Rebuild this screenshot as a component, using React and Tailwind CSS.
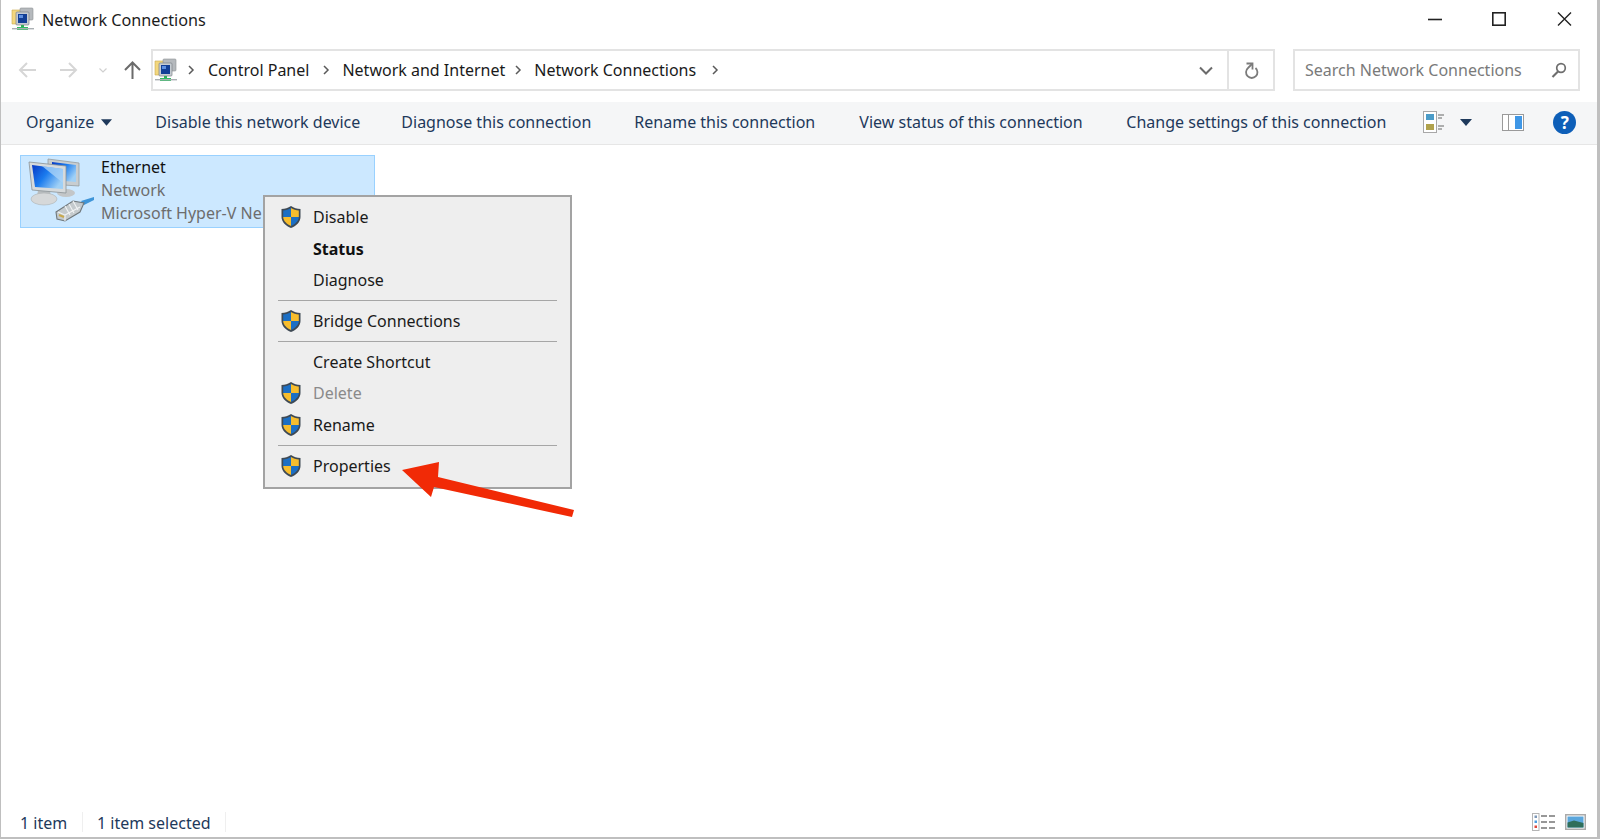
const font = { fontFamily: '"Noto Sans", sans-serif' };

function Shield() {
  return (
    <svg width="22" height="24" viewBox="0 0 22 24" className="shrink-0">
      <path d="M11 1 C8 3 5 4 1.5 4 L1.5 12 C1.5 17 6 21 11 23 C16 21 20.5 17 20.5 12 L20.5 4 C17 4 14 3 11 1Z" fill="#3f4a55" />
      <path d="M11 3 C8.5 4.5 6 5.5 3.2 5.6 L3.2 12 L11 12Z" fill="#1c6fc4" />
      <path d="M11 3 C13.5 4.5 16 5.5 18.8 5.6 L18.8 12 L11 12Z" fill="#f7bd2d" />
      <path d="M3.2 12 L11 12 L11 21 C7 19.2 3.2 16 3.2 12Z" fill="#f7bd2d" />
      <path d="M18.8 12 L11 12 L11 21 C15 19.2 18.8 16 18.8 12Z" fill="#1c6fc4" />
    </svg>
  );
}

function NetFolderIcon() {
  return (
    <svg width="24" height="25" viewBox="0 0 24 25" className="shrink-0">
      <path d="M1 3h8l2 2v12H1z" fill="#f3d77e" stroke="#c9a94c" strokeWidth="0.6" />
      <rect x="9" y="1" width="13" height="12" rx="1" fill="#b5b9bd" stroke="#8d9195" strokeWidth="0.6" />
      <rect x="5" y="5" width="13" height="13" rx="1" fill="#c6ccd2" stroke="#7d8288" strokeWidth="0.7" />
      <rect x="7" y="7" width="9" height="9" fill="#123f96" />
      <rect x="8" y="8" width="4" height="3" fill="#5d8fe0" />
      <rect x="10" y="18" width="3" height="3" fill="#2fae5b" />
      <rect x="6" y="20" width="11" height="3" fill="#2fbd62" />
      <rect x="1" y="21" width="22" height="1.4" fill="#aab0b3" />
    </svg>
  );
}

function EthernetIcon() {
  return (
    <svg width="70" height="66" viewBox="0 0 70 66" className="shrink-0 mt-[1px]">
      <defs>
        <linearGradient id="scr" x1="0" y1="0" x2="1" y2="0.6">
          <stop offset="0" stopColor="#0838c4" />
          <stop offset="0.5" stopColor="#1a7bee" />
          <stop offset="1" stopColor="#9fd0f6" />
        </linearGradient>
      </defs>
      <ellipse cx="39" cy="36" rx="9" ry="4" fill="#c3c6c8" />
      <path d="M21 2 L52 6 L52 29 L21 27Z" fill="#c8cdd0" stroke="#949ca0" strokeWidth="0.8" />
      <path d="M25 5 L49 8 L49 25 L25 23Z" fill="url(#scr)" />
      <path d="M11 33 L23 34 L24 40 L10 40Z" fill="#b9bdbf" />
      <ellipse cx="17" cy="42" rx="13" ry="6" fill="#d6d8d9" stroke="#adb1b3" strokeWidth="0.6" />
      <path d="M2 5 L39 9 L39 36 L5 33Z" fill="#d6dadc" stroke="#8a9296" strokeWidth="0.8" />
      <path d="M5 8 L36 12 L36 32 L8 30Z" fill="url(#scr)" />
      <path d="M15 9 L36 12 L36 26 Z" fill="#a9d2f8" opacity="0.8" />
      <path d="M54 44 L67 40 L67 43 L57 48Z" fill="#3f95d8" />
      <path d="M29 55 L46 44 L57 46 L53 55 L38 64 L30 62Z" fill="#c4cacd" stroke="#6f777b" strokeWidth="1.1" />
      <path d="M38 49 L43 58 M42 47 L47 56 M46 44 L51 53 M31 55 L38 58 L38 64 M38 58 L53 50" fill="none" stroke="#f1f3f4" strokeWidth="1.1" />
      <path d="M32 58 L37 60" stroke="#c9a94c" strokeWidth="2" />
    </svg>
  );
}

function Sep() {
  return (
    <svg width="8" height="12" viewBox="0 0 8 12" className="shrink-0">
      <path d="M2 2 L6 6 L2 10" fill="none" stroke="#5a5a5a" strokeWidth="1.5" />
    </svg>
  );
}

function Caret({ className }) {
  return (
    <svg width="12" height="7" viewBox="0 0 12 7" className={className}>
      <path d="M0 0H12L6 7Z" fill="#1e395b" />
    </svg>
  );
}

function MenuItem({ label, shield, bold, disabled }) {
  return (
    <div className="flex items-center h-[31.3px]">
      <div className="w-[16px] mr-[14px] ml-[5px] flex items-center justify-center">{shield && <Shield />}</div>
      <span className={`text-[16px] ${bold ? 'font-bold text-[#111]' : disabled ? 'text-[#8a8a8a]' : 'text-[#1a1a1a]'}`}>{label}</span>
    </div>
  );
}

function MenuSep() {
  return <div className="h-px bg-[#a6a6a6] mr-[13px] my-[4.4px]" />;
}

export default function App() {
  const tools = [
    ['Disable this network device', 'w-[246px]'],
    ['Diagnose this connection', 'w-[233px]'],
    ['Rename this connection', 'w-[225px]'],
    ['View status of this connection', 'w-[267px]'],
  ];
  return (
    <div style={font} className="relative w-[1600px] h-[839px] overflow-hidden bg-white border-l border-r-[3px] border-b-2 border-[#bfbfbf] flex flex-col text-[#1a1a1a]">
      {/* title bar */}
      <div className="h-[49px] flex pl-[10px] pr-[25px] pt-[7px] shrink-0">
        <NetFolderIcon />
        <span className="ml-[7px] text-[16.2px] leading-[26px] text-[#1c1c1c]">Network Connections</span>
        <div className="ml-auto flex items-start gap-[50px] pt-[5px]">
          <svg width="14" height="14" viewBox="0 0 14 14"><path d="M0 7.5H14" stroke="#222" strokeWidth="1.6" /></svg>
          <svg width="14" height="14" viewBox="0 0 14 14"><rect x="0.8" y="0.8" width="12.4" height="12.4" fill="none" stroke="#222" strokeWidth="1.6" /></svg>
          <svg width="15" height="14" viewBox="0 0 15 14" className="ml-[1px]"><path d="M1 0.5L14 13.5M14 0.5L1 13.5" stroke="#222" strokeWidth="1.4" /></svg>
        </div>
      </div>
      {/* nav */}
      <div className="h-[42px] flex items-center shrink-0">
        <div className="w-[150px] flex items-center pl-[17px] shrink-0">
          <svg width="18" height="16" viewBox="0 0 18 16"><path d="M18 8H2M9 1L2 8l7 7" fill="none" stroke="#d6d6d6" strokeWidth="2" /></svg>
          <svg width="18" height="16" viewBox="0 0 18 16" className="ml-[24px]"><path d="M0 8H16M9 1l7 7-7 7" fill="none" stroke="#d6d6d6" strokeWidth="2" /></svg>
          <svg width="8" height="5" viewBox="0 0 8 5" className="ml-[21px]"><path d="M0.5 0.5L4 4l3.5-3.5" fill="none" stroke="#d0d0d0" strokeWidth="1.2" /></svg>
          <svg width="17" height="18" viewBox="0 0 17 18" className="ml-[17px]"><path d="M8.5 18V2M1 9l7.5-7.5L16 9" fill="none" stroke="#6b6b6b" strokeWidth="2" /></svg>
        </div>
        <div className="w-[1124px] h-full border-2 border-[#e3e3e3] flex items-center shrink-0 text-[16px]">
          <div className="ml-[1px] mr-[9px]"><NetFolderIcon /></div>
          <Sep />
          <span className="ml-[13px]">Control Panel</span>
          <span className="ml-[13px]"><Sep /></span>
          <span className="ml-[12px]">Network and Internet</span>
          <span className="ml-[9px]"><Sep /></span>
          <span className="ml-[12px]">Network Connections</span>
          <span className="ml-[15px]"><Sep /></span>
          <div className="ml-auto flex items-center h-full">
            <svg width="14" height="9" viewBox="0 0 14 9" className="mr-[14px]"><path d="M1 1.5L7 7.5l6-6" fill="none" stroke="#6b6b6b" strokeWidth="2" /></svg>
            <div className="w-[46px] h-full border-l-2 border-[#e3e3e3] flex items-center justify-center">
              <svg width="16" height="20" viewBox="0 0 16 20"><path d="M3.5 3.5H9.5V9.5" fill="none" stroke="#7b7b7b" strokeWidth="1.8" /><path d="M9 4L5 8A5.7 5.7 0 1 0 12.5 8" fill="none" stroke="#7b7b7b" strokeWidth="1.8" /></svg>
            </div>
          </div>
        </div>
        <div className="ml-[18px] w-[287px] h-full border-2 border-[#e3e3e3] flex items-center px-[10px] shrink-0 text-[16px] text-[#7a7a7a]">
          <span>Search Network Connections</span>
          <svg width="16" height="16" viewBox="0 0 16 16" className="ml-auto mr-[1px]"><circle cx="10" cy="6" r="4.3" fill="none" stroke="#6e6e6e" strokeWidth="1.7" /><path d="M7 9.5L1.5 15" stroke="#6e6e6e" strokeWidth="2.2" /></svg>
        </div>
      </div>
      {/* toolbar */}
      <div className="mt-[11px] h-[43px] bg-[#f5f6f7] border-b border-[#e6e6e6] flex items-center pb-[2px] pl-[25px] text-[16px] text-[#1e395b] shrink-0">
        <span>Organize</span>
        <Caret className="ml-[7px] w-[11px] mr-[43px]" />
        {tools.map(([t, w]) => <span key={t} className={`${w} whitespace-nowrap`}>{t}</span>)}
        <span className="whitespace-nowrap">Change settings of this connection</span>
        <svg width="22" height="22" viewBox="0 0 22 22" className="ml-[37px]">
          <rect x="0.5" y="0.5" width="13" height="21" fill="#fff" stroke="#a8a8a8" />
          <rect x="3" y="3" width="8" height="6" fill="#4b9cc8" />
          <rect x="3" y="13" width="8" height="6" fill="#b0a24c" />
          <path d="M15 4h6M15 7h4M15 15h6M15 18h4" stroke="#666" strokeWidth="1.2" />
        </svg>
        <Caret className="ml-[15px] w-[12px]" />
        <svg width="22" height="17" viewBox="0 0 22 17" className="ml-[30px]">
          <rect x="0.5" y="0.5" width="21" height="16" fill="#fff" stroke="#9a9a9a" />
          <rect x="13" y="2" width="7" height="13" fill="#3f97e6" />
          <path d="M6.5 1v15" stroke="#9a9a9a" />
        </svg>
        <div className="ml-[29px] w-[23px] h-[23px] rounded-full bg-[#0e5fb8] flex items-center justify-center text-white text-[17px] font-bold leading-none">?</div>
      </div>
      {/* content */}
      <div className="flex-1 pt-[10px] pl-[19px]">
        <div className="w-[355px] h-[73px] bg-[#cce8ff] border border-[#99d1ff] flex pl-[6px]">
          <EthernetIcon />
          <div className="ml-[4px] text-[16px] leading-[23px] whitespace-nowrap">
            <div className="text-[#111]">Ethernet</div>
            <div className="text-[#6d6d6d]">Network</div>
            <div className="text-[#6d6d6d]">Microsoft Hyper-V Ne</div>
          </div>
        </div>
      </div>
      {/* status */}
      <div className="h-[37px] flex items-center pl-[19px] pr-[11px] text-[16px] text-[#1e395b] shrink-0">
        <span className="w-[62px] pt-[9px]">1 item</span>
        <div className="w-px h-[20px] bg-[#efefef] mt-[6px]" />
        <span className="ml-[14px] pt-[9px]">1 item selected</span>
        <div className="w-px h-[20px] bg-[#efefef] ml-[14px] mt-[6px]" />
        <svg width="24" height="18" viewBox="0 0 24 18" className="ml-auto mt-[6px]">
          <rect x="0.5" y="0.5" width="6.5" height="17" fill="#fff" stroke="#b5b5b5" />
          <rect x="2.5" y="2.5" width="2.5" height="2.5" fill="#7c98b8" />
          <rect x="2.5" y="7.5" width="2.5" height="2.5" fill="#4a9de0" />
          <rect x="2.5" y="12.5" width="2.5" height="2.5" fill="#e0463c" />
          <path d="M9 3h6M17 3h6M9 9h6M17 9h6M9 15h6M17 15h6" stroke="#777" strokeWidth="1.6" />
        </svg>
        <svg width="21" height="16" viewBox="0 0 21 16" className="ml-[9px] mt-[6px]">
          <rect x="0.75" y="0.75" width="19.5" height="14.5" fill="#fff" stroke="#aaa" strokeWidth="1.5" />
          <rect x="2.5" y="2.5" width="16" height="11" fill="#5aa6dc" />
          <path d="M2.5 8.5 L9 6.5 L18.5 9 V13.5 H2.5Z" fill="#2f6e5a" />
        </svg>
      </div>
      {/* context menu */}
      <div className="absolute left-[262px] top-[195px] w-[309px] h-[294px] bg-[#eeeeee] border-2 border-[#a3a3a3] pl-[13px] pt-[4.6px]">
        <MenuItem label="Disable" shield />
        <MenuItem label="Status" bold />
        <MenuItem label="Diagnose" />
        <MenuSep />
        <MenuItem label="Bridge Connections" shield />
        <MenuSep />
        <MenuItem label="Create Shortcut" />
        <MenuItem label="Delete" shield disabled />
        <MenuItem label="Rename" shield />
        <MenuSep />
        <MenuItem label="Properties" shield />
      </div>
      {/* annotation arrow */}
      <svg width="182" height="62" viewBox="0 0 182 62" className="absolute left-[396px] top-[460px]">
        <path d="M5 10 L42 2 L41 17 L177 50 L175 57 L37 27 L34 37Z" fill="#f12a06" />
      </svg>
    </div>
  );
}
